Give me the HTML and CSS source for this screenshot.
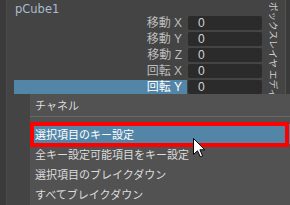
FILE: index.html
```html
<!DOCTYPE html>
<html lang="ja">
<head>
  <meta charset="UTF-8">
  <title>チャネル ボックス</title>
  <link rel="stylesheet" href="styles.css">
</head>
<body>

<!-- チャネル ボックス -->
<div class="editor">
  <div class="edge"></div>
  <div class="channels">
    <div class="title">pCube1</div>
    <div class="rows">
      <div class="row"><span class="label">移動 X</span><span class="field">0</span></div>
      <div class="row"><span class="label">移動 Y</span><span class="field">0</span></div>
      <div class="row"><span class="label">移動 Z</span><span class="field">0</span></div>
      <div class="row"><span class="label">回転 X</span><span class="field">0</span></div>
      <div class="row active"><span class="label">回転 Y</span><span class="field">0</span></div>
    </div>
  </div>
  <div class="tab"><span>ボックスレイヤ エディタ</span></div>
  <div class="edge-right"></div>
</div>

<!-- 右クリック メニュー -->
<div class="menu">
  <div class="item">チャネル</div>
  <div class="sep"></div>
  <div class="item selected">選択項目のキー設定</div>
  <div class="item">全キー設定可能項目をキー設定</div>
  <div class="item">選択項目のブレイクダウン</div>
  <div class="item">すべてブレイクダウン</div>
</div>

<svg class="cursor" width="13" height="20" viewBox="0 0 13 20">
  <path d="M0.5 0.5 L0.5 16.5 L4.5 12.8 L7.3 18.8 L9.6 17.8 L6.9 11.8 L11.8 11.8 Z" fill="#fff" stroke="#000" stroke-width="1"/>
</svg>

</body>
</html>
```

FILE: styles.css
```css
body {
  margin: 0;
  width: 290px;
  height: 205px;
  overflow: hidden;
  position: relative;
  background-color: #444444;
  font-family: "Noto Sans CJK JP", "Noto Sans", sans-serif;
}
.editor {
  display: flex;
  height: 205px;
}
.edge {
  width: 6px;
  background-color: #3b3b3b;
  border-right: 1px solid #4a4a4a;
}
.channels {
  flex: 1;
  padding-left: 7px;
}
.title {
  height: 16px;
  padding-left: 1px;
  font-family: "DejaVu Sans", sans-serif;
  font-size: 11.5px;
  line-height: 18px;
  color: #a9bccf;
}
.rows {
  display: flex;
  flex-direction: column;
  gap: 2px;
}
.row {
  display: flex;
  height: 14px;
}
.label {
  width: 168px;
  padding-right: 5px;
  text-align: right;
  font-family: "Liberation Sans", "Noto Sans CJK JP", sans-serif;
  font-size: 12px;
  line-height: 14px;
  color: #bdbdbd;
}
.row.active .label {
  background-color: #5285a6;
  color: #fff;
}
.field {
  margin-left: 1px;
  width: 64px;
  padding-left: 10px;
  background-color: #2b2b2b;
  border-radius: 2px;
  font-family: "Liberation Sans", Arial, sans-serif;
  font-size: 12px;
  line-height: 14px;
  color: #d4d4d4;
}
.tab {
  width: 23px;
  display: flex;
  justify-content: center;
}
.tab span {
  writing-mode: vertical-rl;
  text-orientation: sideways;
  white-space: nowrap;
  padding-top: 2px;
  font-size: 9.5px;
  line-height: 12px;
  color: #d0d0d0;
}
.edge-right {
  width: 4px;
  background-color: #3a3a3a;
  border-left: 1px solid #525252;
}
.menu {
  position: absolute;
  left: 30px;
  top: 94px;
  right: 0;
  bottom: 0;
  padding-top: 1px;
  background-color: #525252;
}
.item {
  position: relative;
  height: 20px;
  padding-left: 5px;
  font-size: 11px;
  line-height: 20px;
  color: #dcdcdc;
  white-space: nowrap;
}
.sep {
  height: 9px;
  background: linear-gradient(#525252 1px, #686868 1px, #686868 2px, #525252 2px);
}
.item.selected {
  background-color: #5285a6;
  color: #fff;
}
/* 赤い枠 */
.item.selected::after {
  content: "";
  position: absolute;
  left: 0;
  right: 1px;
  top: -2px;
  bottom: -3px;
  border: 4px solid #ff0000;
}
.cursor {
  position: absolute;
  left: 193px;
  top: 138px;
}
```
